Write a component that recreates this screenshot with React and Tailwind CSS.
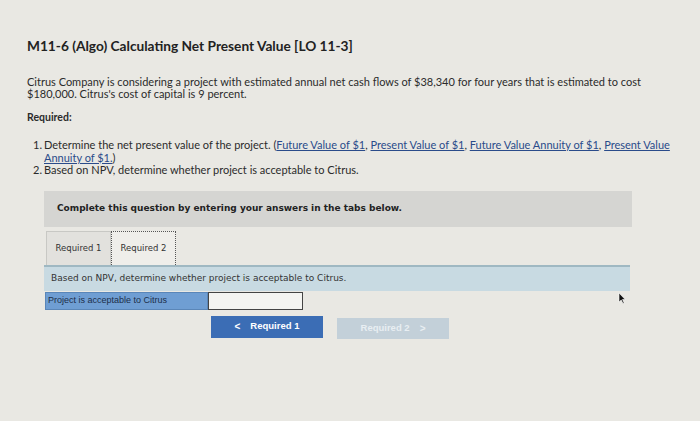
export default function App() {
  const sans = { fontFamily: '"Liberation Sans", Arial, sans-serif' };
  const verdana = { fontFamily: '"DejaVu Sans", Verdana, sans-serif' };
  const link = "underline text-[#2a4b8a]";
  return (
    <div className="w-[700px] h-[421px] bg-[#e9e8e3] text-[#2b2b2b] overflow-hidden relative" style={{ fontFamily: 'Lato, "Liberation Sans", sans-serif' }}>
      <div className="pl-[27px] pt-[36px]">
        <h1 className="text-[13.7px] font-bold leading-[20px] text-[#222]">M11-6 (Algo) Calculating Net Present Value [LO 11-3]</h1>
        <p className="mt-[20px] text-[11px] leading-[12px] w-[660px]">
          Citrus Company is considering a project with estimated annual net cash flows of $38,340 for four years that is estimated to cost<br />
          $180,000. Citrus's cost of capital is 9 percent.
        </p>
        <p className="mt-[11px] text-[10.5px] font-bold leading-[12px]">Required:</p>
        <ol className="mt-[16px] text-[11px] leading-[12.5px] pl-[6px]">
          <li className="flex">
            <span className="w-[11px] shrink-0">1.</span>
            <div className="flex flex-col">
              <div className="whitespace-nowrap">
                Determine the net present value of the project. (<span className={link}>Future Value of $1</span>, <span className={link}>Present Value of $1</span>, <span className={link}>Future Value Annuity of $1</span>, <span className={link}>Present Value</span>
              </div>
              <div><span className={link}>Annuity of $1.</span>)</div>
            </div>
          </li>
          <li className="flex">
            <span className="w-[11px] shrink-0">2.</span>
            <span>Based on NPV, determine whether project is acceptable to Citrus.</span>
          </li>
        </ol>
      </div>

      <div className="ml-[44px] mt-[14px] w-[588px]">
        <div className="h-[36px] bg-[#d5d5d2] flex items-center pl-[13px] text-[9px] font-bold text-[#222]" style={verdana}>
          Complete this question by entering your answers in the tabs below.
        </div>
        <div className="flex mt-[4px] h-[34px] pl-[2px]" style={verdana}>
          <div className="w-[65px] bg-[#e2e1dd] border border-[#c8c8c4] border-b-0 flex items-center justify-center text-[8.5px] text-[#333]">Required 1</div>
          <div className="w-[65px] bg-[#efeeea] border border-dotted border-[#555] border-b-0 flex items-center justify-center text-[8.5px] text-[#333]">Required 2</div>
        </div>
        <div className="w-[586px] h-[26px] bg-[#c8dae2] border-t-2 border-[#9fb8c2] flex items-center pl-[7px] text-[9px] text-[#333]" style={verdana}>
          Based on NPV, determine whether project is acceptable to Citrus.
        </div>
        <div className="flex h-[18px] mt-[1px] ml-[1px]" style={sans}>
          <div className="w-[163px] bg-[#6f9ed3] border border-[#5a86b8] flex items-center pl-[2px] text-[9px] text-[#1d2f4a]">Project is acceptable to Citrus</div>
          <div className="w-[95px] bg-[#f4f4f1] border border-[#444]"></div>
        </div>
        <div className="flex mt-[6px] ml-[167px] gap-[14px]" style={sans}>
          <div className="w-[112px] h-[22px] bg-[#3b6db5] flex items-center justify-center gap-[10px] text-white text-[9.5px] font-bold">
            <span className="text-[10px]">&lt;</span><span>Required 1</span>
          </div>
          <div className="w-[112px] h-[21px] mt-[2px] bg-[#c3d0d9] flex items-center justify-center gap-[10px] text-[#e8eef2] text-[9.5px] font-bold">
            <span>Required 2</span><span className="text-[10px]">&gt;</span>
          </div>
        </div>
      </div>

      <svg className="absolute left-[618px] top-[292px]" width="8" height="12" viewBox="0 0 8 12">
        <path d="M1 1 L1 10 L3.2 8 L5 11.5 L6.2 11 L4.5 7.5 L7.2 7.5 Z" fill="#111" stroke="#fff" strokeWidth="0.6" />
      </svg>
    </div>
  );
}
